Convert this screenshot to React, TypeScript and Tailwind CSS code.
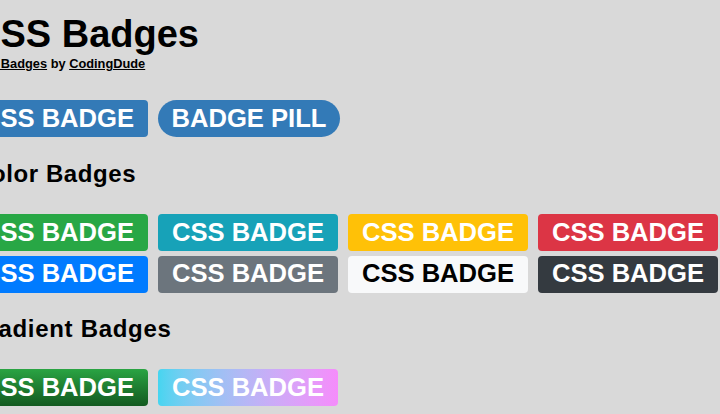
import React from "react";

const font = { fontFamily: '"Liberation Sans", Arial, Helvetica, sans-serif' };

function Badge({ cls, text = "CSS BADGE" }: { cls: string; text?: string }) {
  return (
    <div
      className={`flex h-[37px] w-[180px] shrink-0 items-center justify-center rounded-[4px] text-[25.6px] font-bold leading-none ${cls}`}
    >
      {text}
    </div>
  );
}

export default function App() {
  return (
    <div className="min-h-screen w-full overflow-hidden bg-[#d9d9d9] pt-[12px] text-black" style={font}>
      <div className="-ml-[32px] flex flex-col">
        <h1 className="ml-[5px] whitespace-nowrap text-[38px] font-bold leading-[44px]">CSS Badges</h1>
        <p className="ml-[3px] whitespace-nowrap text-[12.8px] font-bold leading-[15px]">
          <a className="underline">CSS Badges</a> by <a className="underline">CodingDude</a>
        </p>

        <div className="mt-[29px] flex gap-[10px]">
          <Badge cls="bg-[#337ab7] text-white" />
          <div className="flex h-[37px] w-[182px] shrink-0 items-center justify-center rounded-full bg-[#337ab7] text-[25.6px] font-bold leading-none text-white">
            BADGE PILL
          </div>
        </div>

        <h2 className="ml-[5px] mt-[23px] whitespace-nowrap text-[24px] font-bold leading-[28px] tracking-[0.6px]">
          Color Badges
        </h2>

        <div className="mt-[26px] flex flex-col gap-[4.5px]">
          <div className="flex gap-[10px]">
            <Badge cls="bg-[#28a745] text-white" />
            <Badge cls="bg-[#17a2b8] text-white" />
            <Badge cls="bg-[#ffc107] text-white" />
            <Badge cls="bg-[#dc3545] text-white" />
          </div>
          <div className="flex gap-[10px]">
            <Badge cls="bg-[#007bff] text-white" />
            <Badge cls="bg-[#6c757d] text-white" />
            <Badge cls="bg-[#f8f9fa] text-black" />
            <Badge cls="bg-[#343a40] text-white" />
          </div>
        </div>

        <h2 className="ml-[1px] mt-[22px] whitespace-nowrap text-[24px] font-bold leading-[28px] tracking-[0.7px]">
          Gradient Badges
        </h2>

        <div className="mt-[26.5px] flex gap-[10px]">
          <Badge cls="bg-gradient-to-b from-[#2aa443] to-[#135a20] text-white" />
          <Badge cls="bg-gradient-to-r from-[#45d5f0] to-[#f58cfb] text-white" />
        </div>
      </div>
    </div>
  );
}
